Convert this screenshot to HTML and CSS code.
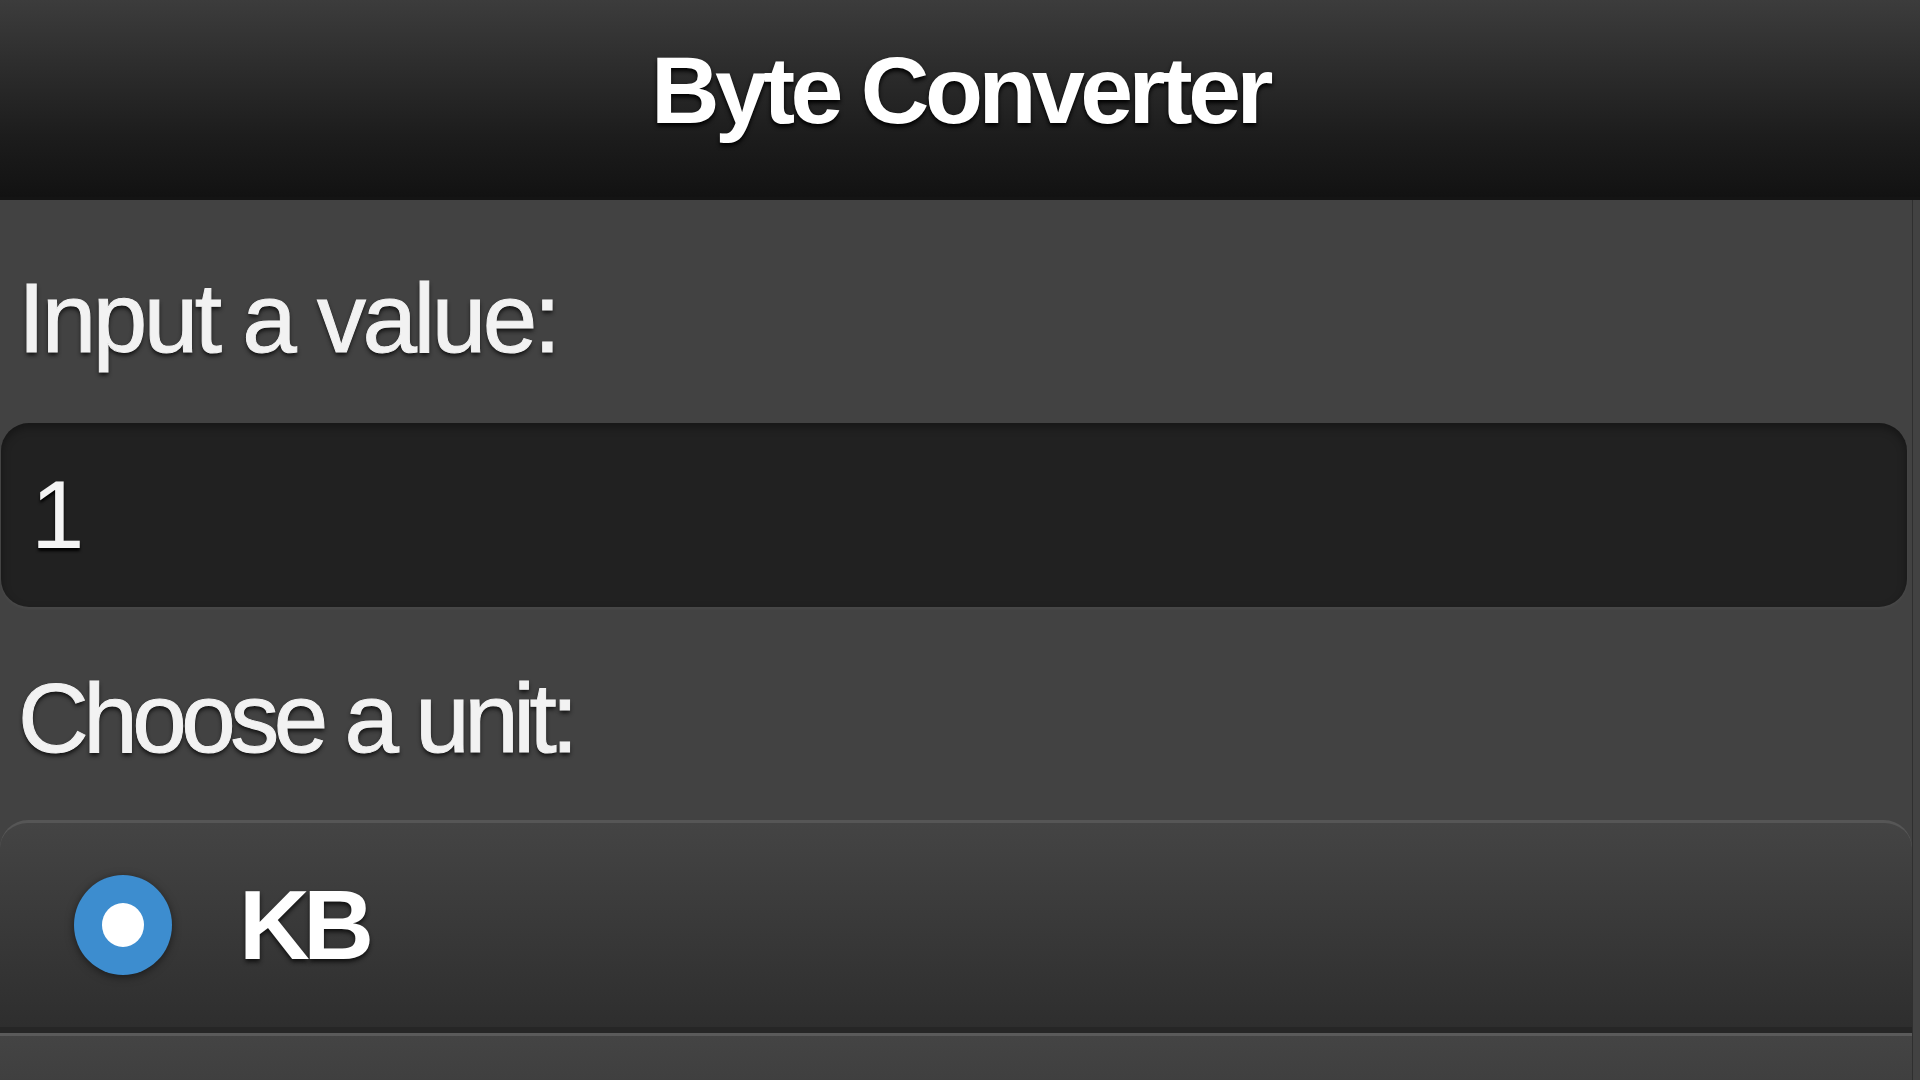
FILE: index.html
```html
<!DOCTYPE html>
<html lang="en">
<head>
    <meta charset="UTF-8">
    <title>Byte Converter</title>
    <meta name="viewport" content="width=device-width, initial-scale=1.0">
    <link rel="stylesheet" href="styles.css">
</head>
<body>
    <!-- Barra superiore -->
    <div class="header">
        <h1>Byte Converter</h1>
    </div>

    <div class="page">
        <label class="field-label" for="value">Input a value:</label>
        <input id="value" class="text-input" type="text" value="1">

        <div class="field-label field-label-tight">Choose a unit:</div>
        <div class="unit-group">
            <label class="unit-option unit-first">
                <span class="radio-icon radio-on"></span>
                <span class="unit-text">KB</span>
            </label>
            <!-- secondo elemento, fuori dallo schermo -->
            <div class="unit-option"></div>
        </div>
    </div>
</body>
</html>
```

FILE: styles.css
```css
body {
    margin: 0;
    height: 1080px;
    overflow: hidden;
    background: #424242;
    font-family: 'Liberation Sans', Arial, sans-serif;
    color: #fff;
}

.header {
    height: 197px;
    background: linear-gradient(#3c3c3c, #1c1c1c 70%, #121212);
    border-bottom: 3px solid #141414;
    text-align: center;
}

.header h1 {
    margin: 0;
    font-size: 95px;
    font-weight: bold;
    line-height: 180px;
    letter-spacing: -4.5px;
    text-shadow: 0 3px 4px #000;
}

.page {
    margin-right: 7px;
    border-right: 1px solid #2f2f2f;
    padding-top: 58px;
    min-height: 900px;
}

.field-label {
    display: block;
    padding-left: 18px;
    font-size: 98px;
    line-height: 120px;
    letter-spacing: -3.5px;
    color: #f2f2f2;
    text-shadow: 0 3px 4px #111;
    -webkit-text-stroke: 1px #f2f2f2;
}

.field-label-tight {
    letter-spacing: -5.5px;
}

.text-input {
    display: block;
    box-sizing: border-box;
    width: 1906px;
    height: 184px;
    margin: 45px 0 51px 1px;
    padding: 0 0 0 30px;
    border: none;
    border-radius: 28px;
    background: #212121;
    box-shadow: inset 0 4px 8px rgba(0, 0, 0, 0.35), 0 2px 3px rgba(255, 255, 255, 0.04);
    font-family: 'Liberation Sans', Arial, sans-serif;
    font-size: 96px;
    color: #f4f4f4;
    text-shadow: 0 3px 3px #000;
    outline: none;
}

.unit-group {
    margin-top: 42px;
}

.unit-option {
    display: flex;
    align-items: center;
    box-sizing: border-box;
    height: 213px;
    padding-left: 74px;
    background: linear-gradient(#444, #2e2e2e);
    border-top: 3px solid #5a5a5a;
    border-bottom: 6px solid #262626;
}

.unit-first {
    border-radius: 28px 28px 0 0;
    border-top-color: #565656;
}

.radio-icon {
    width: 98px;
    height: 100px;
    border-radius: 50%;
    background: #222;
    box-shadow: 0 2px 8px rgba(0, 0, 0, 0.5);
    position: relative;
}

.radio-on {
    background: #3d8dcf;
}

.radio-on::after {
    content: '';
    position: absolute;
    left: 28px;
    top: 28px;
    width: 42px;
    height: 44px;
    border-radius: 50%;
    background: #fff;
}

.unit-text {
    margin-left: 67px;
    font-size: 98px;
    font-weight: bold;
    letter-spacing: -6.5px;
    text-shadow: 0 3px 4px #111;
}
```
